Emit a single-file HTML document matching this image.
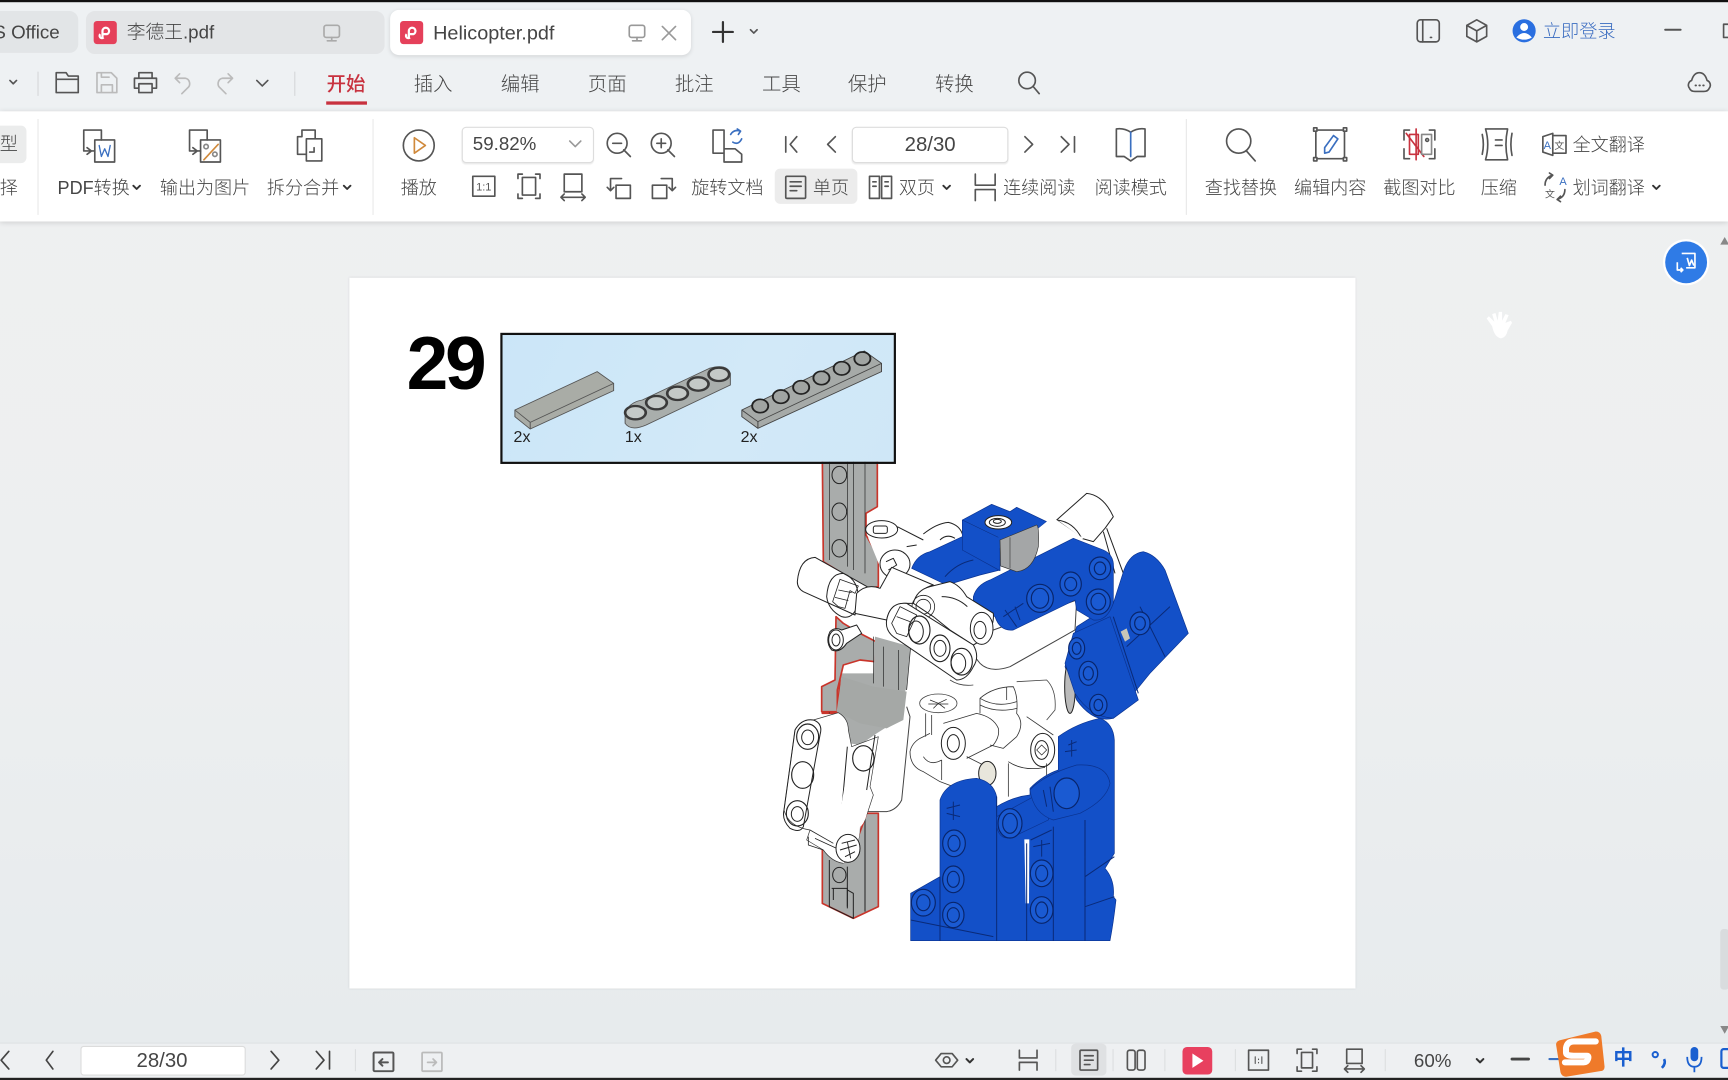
<!DOCTYPE html>
<html lang="zh-CN"><head><meta charset="utf-8"><title>Helicopter.pdf</title>
<style>
html,body{margin:0;padding:0;width:1728px;height:1080px;overflow:hidden;background:#eef0f1}
#w{position:absolute;left:0;top:0;width:1568px;height:980px;transform:scale(1.10204);transform-origin:0 0;overflow:hidden;filter:blur(.35px);
font-family:"Liberation Sans","Noto Sans CJK SC",sans-serif;color:#444;background:linear-gradient(#eff0f1,#edeff0 55%,#e7ebed 95%)}
#w div,#w span,#w svg{position:absolute}
.t{white-space:nowrap;line-height:24px;height:24px;font-size:16.4px;font-weight:300;color:#454545}
.c{transform:translateX(-50%)}
.m{font-size:17.6px;color:#474747}
svg{overflow:visible}
.ic{fill:none;stroke:#555;stroke-width:1.5;stroke-linejoin:round;stroke-linecap:round}
.k{stroke:#222;stroke-width:3;fill:#fff;stroke-linejoin:round}
.l{stroke:#222;stroke-width:3;fill:none;stroke-linejoin:round}
.g{fill:#a9acab;stroke:#333;stroke-width:2.2}
.r{fill:#a9acab;stroke:#c9352b;stroke-width:5;stroke-linejoin:round}
.b{fill:#1350c8;stroke:#0b3390;stroke-width:2;stroke-linejoin:round}
.d{fill:none;stroke:#0a2a78;stroke-width:3}
.h{fill:#1a5ad2;stroke:#08256c;stroke-width:3.5}
</style></head><body><div id="w">

<!-- chrome backgrounds -->
<div style="left:0;top:0;width:1568px;height:101px;background:#eef1f3"></div>
<div style="left:0;top:0;width:1568px;height:1.5px;background:#111"></div>
<div style="left:-10px;top:10px;width:81px;height:38px;background:#e2e5e7;border-radius:8px"></div>
<div style="left:78px;top:10px;width:271px;height:39px;background:#e3e5e7;border-radius:8px"></div>
<div style="left:354px;top:9px;width:273px;height:41px;background:#fff;border-radius:8px;box-shadow:0 1px 4px rgba(0,0,0,.12)"></div>
<div style="left:0;top:101px;width:1568px;height:100px;background:#fff;box-shadow:0 1px 5px rgba(0,0,0,.16)"></div>
<div style="left:-10px;top:114px;width:34px;height:34px;background:#ebecec;border-radius:5px"></div>
<div style="left:34px;top:108px;width:1px;height:87px;background:#e8e8e8"></div>
<div style="left:338px;top:108px;width:1px;height:87px;background:#e8e8e8"></div>
<div style="left:1076px;top:108px;width:1px;height:87px;background:#e8e8e8"></div>
<div style="left:34px;top:65px;width:1px;height:22px;background:#d5d7d9"></div>
<div style="left:267px;top:65px;width:1px;height:22px;background:#d5d7d9"></div>
<div style="left:419px;top:115px;width:118px;height:31px;background:#fff;border:1px solid #ddd;border-radius:4px;box-shadow:0 1px 1px rgba(0,0,0,.08)"></div>
<div style="left:773px;top:115px;width:140px;height:31px;background:#fff;border:1px solid #ddd;border-radius:4px;box-shadow:0 1px 1px rgba(0,0,0,.08)"></div>
<div style="left:703px;top:153px;width:75px;height:32px;background:#ececec;border-radius:5px"></div>
<div style="left:296px;top:92px;width:37px;height:2.5px;background:#c8323f"></div>

<!-- page -->
<div style="left:317px;top:252px;width:913px;height:645px;background:#fff;box-shadow:0 0 2px rgba(0,0,0,.12)"></div>

<!-- LEGO art -->
<svg width="1568" height="980" viewBox="0 0 1728 1080" style="left:0;top:0">
<g transform="translate(760,680) scale(.33333)">
 <path class="g" style="stroke:none" d="M240,-20H440L430,110L350,160L300,195L270,190L235,100Z"/>
 <path class="r" d="M187,100V25L240,0L232,100Z"/>
 <path class="l" d="M208,50V100M228,55H208"/>
 <path class="r" d="M187,505L215,530Q240,555 270,540L320,400H355V680L280,715L187,670Z"/>
 <path class="l" d="M208,540V680L280,715V640L262,630M315,400V695M262,560V685"/>
 <ellipse class="l" cx="238" cy="585" rx="20" ry="23"/>
 <path class="l" d="M215,625H262V680M220,625V660"/>
</g>
<g transform="translate(760,460) scale(.33333)">
 <path class="r" d="M187,-5H352V140L318,160V225L355,290V380L320,385L190,305Z"/>
 <path class="l" d="M208,0V300M262,0V320M280,0V330M315,0V340" style="stroke-width:2"/>
 <ellipse class="l" cx="238" cy="45" rx="22" ry="26"/><ellipse class="l" cx="238" cy="155" rx="22" ry="26"/><ellipse class="l" cx="238" cy="265" rx="22" ry="26"/>
 <path class="r" d="M228,470L250,490L300,520L348,545L345,605L300,600L250,615L232,690V755L185,755V680L225,660Z"/>
 <path style="fill:#a9acab;stroke:none" d="M345,530L452,560L440,690L340,670Z"/>
 <path class="l" d="M370,560V680M415,570V690M340,530V670M452,560L440,690" style="stroke-width:2"/>
 <path style="fill:#a5a8a6;stroke:none" d="M245,650L340,680L440,695L430,780L380,805L300,790L230,755Z"/>
 <path class="k" d="M210,515Q225,500 245,510L290,495L305,520L260,550Q240,580 215,570Q195,545 210,515Z"/>
 <ellipse class="k" cx="228" cy="540" rx="22" ry="30"/><ellipse class="l" cx="228" cy="540" rx="12" ry="18"/>
 <path d="M325,185Q370,170 412,200L560,185Q605,195 610,230L470,335L360,320L325,235Z" fill="#fff"/>
 <ellipse class="k" cx="365" cy="208" rx="48" ry="26"/><rect class="l" x="340" y="198" width="42" height="22" rx="6"/>
 <path class="l" d="M412,200L490,240M440,260L470,255M490,222Q530,190 565,187Q600,195 608,225M540,240Q560,220 585,235"/>
 <ellipse class="k" cx="405" cy="312" rx="45" ry="42"/><path class="l" d="M378,305L400,295L410,315L385,330"/>
 <path class="b" d="M455,325Q470,285 510,275L607,230L720,330L660,345L560,375Z"/>
 <path class="d" d="M555,350Q590,310 640,300"/>
 <path class="k" d="M980,100Q1030,105 1060,170L1035,205L1000,245L965,235L890,180Z"/>
 <path class="l" d="M890,180Q940,185 965,235M1040,205L1090,340M1030,215L1065,340"/>
 <path class="b" d="M607,180L695,133L750,155L770,142L860,185L835,205L720,265V332L607,270Z"/>
 <path class="d" d="M607,180L715,232" style="stroke-width:1.5"/>
 <ellipse class="k" cx="715" cy="187" rx="40" ry="20"/><ellipse class="l" cx="712" cy="187" rx="24" ry="12"/><ellipse class="l" cx="712" cy="184" rx="12" ry="6"/>
 <path d="M860,185L890,180L970,235L850,300L835,205Z" fill="#fff"/>
 <path class="b" d="M1092,330Q1110,280 1150,275Q1190,285 1215,330L1285,520L1170,640L1060,775Q1000,790 950,720L915,620L950,500L1060,430Z"/>
 <path class="d" d="M1060,470L1135,700M1140,440L1215,590M1100,560L1230,440"/>
 <ellipse class="k" cx="930" cy="680" rx="16" ry="80" style="fill:#bbb"/>
 <path class="b" d="M940,520L1050,470L1135,720L1060,775Q990,770 945,700L915,610Z"/>
 <ellipse class="h" cx="950" cy="565" rx="24" ry="32"/><ellipse class="h" cx="950" cy="565" rx="13" ry="18"/>
 <ellipse class="h" cx="985" cy="640" rx="28" ry="36"/><ellipse class="h" cx="985" cy="640" rx="15" ry="20"/>
 <ellipse class="h" cx="1015" cy="735" rx="26" ry="32"/><ellipse class="h" cx="1015" cy="735" rx="13" ry="17"/>
 <ellipse class="h" cx="1140" cy="490" rx="30" ry="34"/><ellipse class="h" cx="1140" cy="490" rx="16" ry="20"/>
 <path d="M1082,515L1100,505L1110,535L1095,545Z" fill="#c8c6b8"/>
 <path class="k" d="M700,510L950,420L945,510L750,620Q690,640 660,610L620,560Z" style="stroke:#444"/>
 <path class="b" d="M640,410Q650,375 690,360L940,235L1030,270Q1065,285 1060,330V430Q1040,485 1000,480L950,450L945,420L760,510Q720,515 705,470L640,430Z"/>
 <ellipse class="h" cx="840" cy="415" rx="40" ry="42"/><ellipse class="h" cx="840" cy="415" rx="26" ry="30"/>
 <ellipse class="h" cx="932" cy="372" rx="32" ry="36"/><ellipse class="h" cx="932" cy="372" rx="18" ry="20"/>
 <ellipse class="h" cx="1020" cy="325" rx="32" ry="34"/><ellipse class="h" cx="1020" cy="325" rx="17" ry="19"/>
 <ellipse class="h" cx="1015" cy="425" rx="36" ry="38"/><ellipse class="h" cx="1015" cy="425" rx="22" ry="25"/>
 <path class="d" d="M730,470L790,430M765,440L780,480M735,450L770,500"/>
 <path style="fill:#a4a6a7;stroke:#333;stroke-width:2" d="M720,240L830,195Q838,200 835,260Q820,330 770,335L722,318Z"/>
 <path class="l" d="M750,232V325" style="stroke-width:1.6"/>
 <!-- white arms -->
 <path class="k" d="M112,365Q118,295 165,292L330,385L300,395L285,465L130,395Q112,385 112,365Z"/>
 <path class="l" d="M200,410Q205,340 250,340Q300,360 295,430Q280,480 245,470Q205,450 200,410Z"/>
 <path class="l" d="M218,425L240,358L295,378L285,400L270,392L255,445L235,440ZM235,390L275,398M225,412L265,422" style="stroke-width:2.4"/>
 <path class="k" d="M290,400Q320,370 360,385L395,322L520,375Q480,385 460,430L445,430Q390,425 380,480L285,460Z"/>
 <path class="k" d="M460,430Q470,390 510,380L570,365Q600,375 620,410L700,460Q705,520 640,555L570,510L520,470Z"/>
 <path class="l" d="M545,410Q590,410 622,440"/>
 <ellipse class="l" cx="490" cy="440" rx="34" ry="34" style="stroke-width:2.4"/><ellipse class="l" cx="490" cy="440" rx="22" ry="22" style="stroke-width:2.4"/>
 <ellipse class="k" cx="665" cy="505" rx="34" ry="48"/><ellipse class="l" cx="660" cy="510" rx="18" ry="26"/>
 <path class="k" d="M380,480Q390,425 440,430L640,555Q660,590 640,620Q620,660 590,660L400,530Q375,510 380,480Z"/>
 <path class="l" d="M395,490L420,440L470,465L440,530L410,520ZM410,470L450,485" style="stroke-width:2.4"/>
 <ellipse class="l" cx="478" cy="510" rx="32" ry="42" style="stroke-width:3.4"/><ellipse class="l" cx="468" cy="515" rx="22" ry="32"/>
 <ellipse class="l" cx="540" cy="565" rx="30" ry="40" style="stroke-width:3.4"/><ellipse class="l" cx="540" cy="565" rx="18" ry="24"/>
 <ellipse class="l" cx="605" cy="605" rx="32" ry="40" style="stroke-width:3.4"/><ellipse class="l" cx="595" cy="610" rx="22" ry="30"/>
</g>
<g transform="translate(760,680) scale(.33333)">
 <path class="l" d="M440,80L450,110L425,360Q410,390 380,395L320,395" style="stroke:#444"/>
 <path class="k" d="M72,390L105,150Q125,115 160,120L235,98Q265,115 265,150L275,200L355,170L330,320L340,345L322,400L300,440Q300,510 250,550Q215,545 190,510L140,480L150,450Q85,440 72,390Z" style="stroke:#333;stroke-width:2"/>
 <path class="l" d="M105,150Q125,115 160,120Q190,130 180,165L130,440Q120,460 90,445Q65,420 72,390ZM262,200L240,450M345,165L320,330"/>
 <ellipse class="l" cx="143" cy="170" rx="33" ry="38" style="stroke-width:3.4"/><ellipse class="l" cx="143" cy="172" rx="18" ry="22"/>
 <ellipse class="l" cx="128" cy="285" rx="33" ry="40" style="stroke-width:3.4"/>
 <ellipse class="l" cx="112" cy="400" rx="33" ry="38" style="stroke-width:3.4"/><ellipse class="l" cx="112" cy="402" rx="18" ry="22"/>
 <ellipse class="l" cx="310" cy="235" rx="32" ry="38" style="stroke-width:3.4"/>
 <path d="M255,310Q300,300 330,350Q320,430 300,440Q300,510 250,550L225,520L240,400Z" fill="#fff"/>
 <path class="l" d="M150,450L220,490M165,475L230,505M145,470V495L190,510" style="stroke-width:2.4"/>
 <ellipse class="k" cx="264" cy="505" rx="36" ry="42"/><path class="l" d="M245,490L285,480M240,510L290,495M255,530L285,515M262,485L272,535" style="stroke-width:2.8"/>
 <!-- middle white technic, lines only -->
 <path class="l" d="M570,0Q600,20 640,15M770,5L860,0Q890,30 885,90L860,120" style="stroke:#444;stroke-width:2.4"/>
 <ellipse class="k" cx="535" cy="70" rx="56" ry="28" style="stroke:#444;stroke-width:2.4"/>
 <path class="l" d="M510,60L535,70L520,85M560,58L535,70L555,85M505,72H565" style="stroke-width:2.2"/>
 <path class="l" style="stroke:#333;stroke-width:2.4" d="M497,100V170M515,105V165M550,130L650,100Q700,110 715,145Q720,170 700,195L620,235M450,215Q450,260 490,275L540,305L575,318M450,215Q455,190 480,175L510,160M545,240V300M620,230L700,270M545,240Q510,260 490,230"/>
 <path class="l" style="stroke:#333;stroke-width:2.4" d="M660,100V55Q700,20 760,20Q775,50 770,100Q795,130 770,170L730,205L690,195M660,55Q710,85 770,65M660,75Q710,100 770,85M800,110L880,165M740,20V60"/>
 <ellipse class="k" cx="580" cy="190" rx="36" ry="48"/><ellipse class="l" cx="580" cy="190" rx="18" ry="26"/>
 <ellipse class="k" cx="848" cy="210" rx="36" ry="50"/><ellipse class="l" cx="845" cy="210" rx="20" ry="28"/><path class="l" d="M830,210L845,195L860,210L845,225Z" style="stroke-width:2"/>
 <ellipse class="k" cx="682" cy="280" rx="26" ry="36" style="fill:#e8e6dc"/>
 <path class="l" d="M745,245Q790,275 855,262M745,250V350M860,250V310" style="stroke-width:2.2"/>
 <!-- blue legs -->
 <path class="b" d="M452,640L540,590V360Q560,300 650,295Q700,305 710,350V380Q760,350 810,345V325Q850,285 895,270V170Q950,130 1020,115Q1060,130 1063,180V520L1035,565Q1065,600 1060,650L1068,660Q1060,730 1050,782H452Z"/>
 <path d="M793,478L808,478L807,670H797Z" fill="#fff"/>
 <path class="d" d="M710,350V782M800,490V782M880,440V782M975,420V782M812,480L875,450M1063,530L975,590M975,680L1063,650M540,590V782M452,720L700,770"/>
 <path class="b" d="M710,410L830,345Q875,370 865,420L760,470Q720,485 710,440Z"/>
 <ellipse class="h" cx="750" cy="430" rx="36" ry="44"/><ellipse class="h" cx="750" cy="430" rx="22" ry="30"/>
 <path class="b" d="M810,330Q850,285 950,255Q1040,250 1050,310Q1040,360 960,400L880,420Q820,400 810,330Z"/>
 <ellipse class="h" cx="920" cy="340" rx="38" ry="46"/>
 <path class="d" d="M850,330L860,380M870,320L880,395"/>
 <ellipse class="h" cx="582" cy="490" rx="34" ry="40"/><ellipse class="h" cx="582" cy="490" rx="18" ry="24"/>
 <ellipse class="h" cx="580" cy="598" rx="32" ry="40"/><ellipse class="h" cx="580" cy="598" rx="18" ry="24"/>
 <ellipse class="h" cx="580" cy="705" rx="32" ry="38"/><ellipse class="h" cx="580" cy="705" rx="18" ry="22"/>
 <ellipse class="h" cx="490" cy="668" rx="36" ry="40"/><ellipse class="h" cx="490" cy="668" rx="20" ry="24"/>
 <ellipse class="h" cx="845" cy="580" rx="34" ry="40"/><ellipse class="h" cx="845" cy="580" rx="18" ry="24"/>
 <ellipse class="h" cx="845" cy="690" rx="34" ry="40"/><ellipse class="h" cx="845" cy="690" rx="18" ry="24"/>
 <path class="d" d="M560,385L600,375M580,365V420M560,400L600,410M820,500L870,490M845,480V530M925,195L950,185M935,180V230M915,215L950,210"/>
</g>
</svg>

<!-- callout -->
<div style="left:454px;top:302px;width:355px;height:115px;background:linear-gradient(115deg,#cbe6f8,#d2e9f8 60%,#cfe7f7);border:2.5px solid #111"></div>
<svg width="1568" height="980" viewBox="0 0 1728 1080" style="left:0;top:0">
<g transform="translate(340,270) scale(.38270,.33333)">
 <path d="M457,420L672,305L715,340V362L497,477L457,440Z" fill="#a9aca6" stroke="#555" stroke-width="2.5"/>
 <path d="M457,420L497,457L715,340M497,457V477" fill="none" stroke="#555" stroke-width="2.5"/>
 <path d="M745,425Q760,395 790,390L965,295Q1010,280 1020,310V345L800,465Q760,485 745,460Z" fill="#a9aeac" stroke="#555" stroke-width="2.5"/>
 <g fill="#c4c9c7" stroke="#3a3a3a" stroke-width="7">
 <ellipse cx="772" cy="428" rx="27" ry="20"/><ellipse cx="827" cy="398" rx="27" ry="20"/><ellipse cx="882" cy="370" rx="27" ry="20"/><ellipse cx="936" cy="342" rx="27" ry="20"/><ellipse cx="990" cy="313" rx="27" ry="20"/></g>
 <path d="M1050,420L1370,243L1415,280V305L1092,475L1050,440Z" fill="#a6aaa8" stroke="#444" stroke-width="2.5"/>
 <path d="M1050,420L1092,455L1415,280M1092,455V475" fill="none" stroke="#444" stroke-width="2.5"/>
 <g fill="#a0a4a2" stroke="#222" stroke-width="5">
 <ellipse cx="1098" cy="408" rx="21" ry="20"/><ellipse cx="1152" cy="380" rx="21" ry="20"/><ellipse cx="1205" cy="352" rx="21" ry="20"/><ellipse cx="1258" cy="324" rx="21" ry="20"/><ellipse cx="1311" cy="295" rx="21" ry="20"/><ellipse cx="1365" cy="266" rx="21" ry="20"/></g>
</g>
</svg>
<span class="t" style="left:369px;top:288px;height:84px;line-height:84px;font-size:68px;font-weight:700;color:#000;letter-spacing:-3px">29</span>
<span class="t" style="left:466px;top:385px;font-size:14.5px;color:#222;font-weight:400">2x</span>
<span class="t" style="left:567px;top:385px;font-size:14.5px;color:#222;font-weight:400">1x</span>
<span class="t" style="left:672px;top:385px;font-size:14.5px;color:#222;font-weight:400">2x</span>

<!-- status bar -->
<div style="left:0;top:946px;width:1568px;height:32px;background:#eef0f2;border-top:1px solid #dfe2e4"></div>
<div style="left:0;top:978px;width:1568px;height:2px;background:#222"></div>
<div style="left:73px;top:949px;width:148px;height:25px;background:#fff;border:1px solid #dcdcdc;border-radius:3px"></div>
<div style="left:972px;top:947px;width:32px;height:29px;background:#dfe1e3;border-radius:4px"></div>
<div style="left:322px;top:952px;width:1px;height:20px;background:#dcdee0"></div>
<div style="left:1073px;top:950px;width:27px;height:25px;background:#e8405f;border-radius:4px"></div>

<!-- text: tabs -->
<span class="t" style="left:-6px;top:18px;font-size:17px;font-weight:400">S Office</span>
<span class="t" style="left:115px;top:18px;font-size:17px">李德王.pdf</span>
<span class="t" style="left:393px;top:18px;font-size:18px">Helicopter.pdf</span>
<span class="t" style="left:1400px;top:17px;font-size:16.5px;color:#3a6cc0">立即登录</span>

<!-- menu -->
<span class="t c m" style="left:314px;top:64px;color:#c8323f;font-weight:500">开始</span>
<span class="t c m" style="left:393px;top:64px">插入</span>
<span class="t c m" style="left:472px;top:64px">编辑</span>
<span class="t c m" style="left:551px;top:64px">页面</span>
<span class="t c m" style="left:630px;top:64px">批注</span>
<span class="t c m" style="left:709px;top:64px">工具</span>
<span class="t c m" style="left:787px;top:64px">保护</span>
<span class="t c m" style="left:866px;top:64px">转换</span>

<!-- ribbon labels -->
<span class="t c" style="left:8px;top:119px">型</span>
<span class="t c" style="left:8px;top:159px">择</span>
<span class="t c" style="left:85px;top:159px">PDF转换</span>
<span class="t c" style="left:186px;top:159px">输出为图片</span>
<span class="t c" style="left:275px;top:159px">拆分合并</span>
<span class="t c" style="left:380px;top:159px">播放</span>
<span class="t" style="left:429px;top:119px;font-size:17px">59.82%</span>
<span class="t c" style="left:844px;top:119px;font-size:18.5px">28/30</span>
<span class="t c" style="left:660px;top:159px">旋转文档</span>
<span class="t c" style="left:754px;top:159px">单页</span>
<span class="t c" style="left:832px;top:159px">双页</span>
<span class="t c" style="left:943px;top:159px">连续阅读</span>
<span class="t c" style="left:1026px;top:159px">阅读模式</span>
<span class="t c" style="left:1126px;top:159px">查找替换</span>
<span class="t c" style="left:1207px;top:159px">编辑内容</span>
<span class="t c" style="left:1288px;top:159px">截图对比</span>
<span class="t c" style="left:1360px;top:159px">压缩</span>
<span class="t" style="left:1427px;top:120px">全文翻译</span>
<span class="t" style="left:1427px;top:159px">划词翻译</span>

<!-- status text -->
<span class="t c" style="left:147px;top:950px;font-size:18.5px">28/30</span>
<span class="t c" style="left:1300px;top:951px;font-size:17px">60%</span>

<!-- icons -->
<svg width="1568" height="980" viewBox="0 0 1568 980" style="left:0;top:0">
<g class="ic">
 <!-- tab icons -->
 <g transform="translate(301,30)" stroke="#aaa"><rect x="-7" y="-7" width="14" height="11" rx="2"/><path d="M-4,7H4M0,4V7"/></g>
 <g transform="translate(578,30)" stroke="#999"><rect x="-7" y="-7" width="14" height="11" rx="2"/><path d="M-4,7H4M0,4V7"/></g>
 <path d="M601,24L613,36M613,24L601,36" stroke="#999"/>
 <path d="M656,20V38M647,29H665" stroke="#333" stroke-width="2"/>
 <path d="M681,27L684,30L687,27" stroke="#555"/>
 <!-- right top -->
 <g transform="translate(1296,28)"><rect x="-10" y="-10" width="20" height="20" rx="3"/><path d="M-5,-10V10M2,6H3"/></g>
 <g transform="translate(1340,28)"><path d="M0,-10L9,-5V5L0,10L-9,5V-5ZM-9,-5L0,0L9,-5M0,0V10"/></g>
 <path d="M1511,27H1525" stroke-width="1.8"/>
 <path d="M1564,22H1570V34H1564Z"/>
 <!-- row 2 -->
 <path d="M9,73L12,76L15,73" stroke="#555"/>
 <g transform="translate(61,75)"><path d="M-10,-9H-1L1,-6H10V9H-10ZM-10,-3H10"/></g>
 <g transform="translate(97,75)" stroke="#bbb"><path d="M-9,-9H4L9,-4V9H-9ZM-5,9V2H5V9M-5,-9V-5H2"/></g>
 <g transform="translate(132,75)"><path d="M-6,-4V-9H6V-4M-6,5H-10V-4H10V5H6M-6,1H6V9H-6Z"/></g>
 <g transform="translate(167,75)" stroke="#bbb"><path d="M-4,-8L-8,-4L-4,0M-8,-4H1A5,5 0 0 1 3,5L-2,10"/></g>
 <g transform="translate(203,75)" stroke="#bbb"><path d="M4,-8L8,-4L4,0M8,-4H-1A5,5 0 0 0 -3,5L2,10"/></g>
 <path d="M233,73L238,78L243,73" stroke="#555"/>
 <g transform="translate(934,75)" stroke-width="1.5"><circle cx="-2" cy="-2" r="7.5"/><path d="M3.5,3.5L9,10"/></g>
 <g transform="translate(1542,75)"><path d="M-9,5A4.5,4.5 0 0 1 -7,-2Q-5,-9 0,-9Q5,-9 7,-2A4.5,4.5 0 0 1 9,5Q8,8 4,8H-4Q-8,8 -9,5Z"/><path d="M-3.5,2.5H-3M0,2.5H.5M3.5,2.5H4" stroke-width="1.7"/></g>
 <!-- PDF convert -->
 <g transform="translate(90,132)"><path d="M2,-5V-14H-14V5H-4M-11,2L-7,5L-11,8"/><rect x="-4" y="-5" width="18" height="20"/><path d="M0,0L2,10L5,3L8,10L10,0" stroke="#3a6fc0" stroke-width="1.2"/></g>
 <g transform="translate(186,132)"><path d="M2,-5V-14H-14V5H-4M-11,2L-7,5L-11,8"/><rect x="-4" y="-5" width="18" height="20"/><path d="M-1,13L12,-1" stroke="#d08a3c"/><circle cx="1" cy="1" r="2" stroke="#888"/><circle cx="9" cy="8" r="2" stroke="#888"/></g>
 <g transform="translate(282,132)"><path d="M4,-6V-14H-8V-8H-12V8H-4M-4,-6H10V14H-4ZM-1,6H3V2"/></g>
 <g transform="translate(380,132)"><circle r="14"/><path d="M-4,-7L6,0L-4,7Z" stroke="#d08a3c"/></g>
 <path d="M517,128L522,133L527,128" stroke="#999"/>
 <g transform="translate(561,131)"><circle cx="-1" cy="-1" r="9"/><path d="M5,5L11,11M-5,-1H3"/></g>
 <g transform="translate(601,131)"><circle cx="-1" cy="-1" r="9"/><path d="M5,5L11,11M-5,-1H3M-1,-5V3"/></g>
 <g transform="translate(660,131)"><path d="M-3,4V-13H-13V8H-3M-3,4H7L13,9V16H-3Z"/><path d="M3,-9Q6,-14 12,-12M12,-12L9,-14M12,-12L10,-9M13,-5Q10,1 5,-2" stroke="#3a6fc0"/></g>
 <path d="M713,124V138M723,124L717,131L723,138" stroke-width="1.5"/>
 <path d="M758,124L751,131L758,138"/>
 <path d="M930,124L937,131L930,138"/>
 <path d="M963,124L970,131L963,138M975,124V138"/>
 <g transform="translate(1026,131)"><path d="M0,-11Q-6,-15 -13,-14V11H-6L0,15L6,11H13V-14Q6,-15 0,-11Z"/><path d="M0,-11V11" stroke="#3a6fc0"/></g>
 <!-- row small -->
 <g transform="translate(439,169)"><rect x="-10" y="-9" width="20" height="18"/></g>
 <g transform="translate(480,169)"><rect x="-6" y="-8" width="12" height="16"/><path d="M-10,-7V-11H-6M6,-11H10V-7M10,7V11H6M-6,11H-10V7"/></g>
 <g transform="translate(520,169)"><rect x="-8" y="-11" width="16" height="16"/><path d="M-11,10H11M-8,7L-11,10L-8,13M8,7L11,10L8,13"/></g>
 <g transform="translate(562,169)"><rect x="-3" y="-1" width="13" height="12"/><path d="M-8,4V-7H2M-11,1L-8,4L-5,1"/></g>
 <g transform="translate(602,169)"><rect x="-10" y="-1" width="13" height="12"/><path d="M8,4V-7H-2M11,1L8,4L5,1"/></g>
 <g transform="translate(722,170)"><rect x="-9" y="-10" width="18" height="20" rx="1"/><path d="M-5,-5H5M-5,-1H5M-5,3H1"/></g>
 <g transform="translate(799,170)"><rect x="-10" y="-10" width="9" height="20"/><rect x="1" y="-10" width="9" height="20"/><path d="M-7,-5H-4M-7,-1H-4M4,-5H7M4,-1H7"/></g>
 <g transform="translate(894,170)"><path d="M-9,-12V-2H9V-12M-9,12V2H9V12"/></g>
 <path d="M121,168.5L124,171.5L127,168.5M312,168.5L315,171.5L318,168.5M856,168.5L859,171.5L862,168.5M1500,168.5L1503,171.5L1506,168.5" stroke="#333" stroke-width="1.7"/>
 <!-- right ribbon -->
 <g transform="translate(1126,131)" stroke-width="1.5"><circle cx="-2" cy="-3" r="11"/><path d="M5,6L13,15"/></g>
 <g transform="translate(1207,131)"><path d="M-11,-13H11M-11,13H11M-13,-11V11M13,-11V11"/><rect x="-15" y="-15" width="3" height="3"/><rect x="12" y="-15" width="3" height="3"/><rect x="-15" y="12" width="3" height="3"/><rect x="12" y="12" width="3" height="3"/><path d="M-5,8V3L3,-8L7,-5L-1,7Z" stroke="#3a6fc0"/></g>
 <g transform="translate(1288,131)"><path d="M-9,-13H-14V-4M9,-13H14V-4M-9,13H-14V4M9,13H14V4"/><rect x="-9" y="-9" width="8" height="18" stroke="#c8323f"/><path d="M-12,-10L4,11M-3,-14V14" stroke="#c8323f"/><rect x="2" y="-9" width="9" height="18" stroke="#888"/><circle cx="7" cy="-4" r="1.3"/></g>
 <g transform="translate(1360,131)"><path d="M-12,-14H8Q5,0 8,14H-12Q-8,0 -12,-14ZM-3,-4H3M-3,1H3M12,-10Q10,0 12,10M-15,-9Q-13,0 -15,9"/></g>
 <g transform="translate(1411,131)"><path d="M-11,-7L-2,-10V10L-11,7ZM-2,-8H10V8H-2"/></g>
 <g transform="translate(1411,170)"><path d="M-2,-11Q-9,-9 -9,-2M-5,-13L-2,-11L-5,-8M2,11Q9,9 9,2M5,13L2,11L5,8"/></g>
 <!-- status icons -->
 <path d="M8,954L1,962L8,970M48,954L42,962L48,970" stroke="#444"/>
 <path d="M246,954L253,962L246,970M287,954L294,962L287,970M299,954V970" stroke="#444"/>
 <g transform="translate(348,963)" stroke="#555" stroke-width="1.8"><rect x="-9" y="-8" width="18" height="17" rx="1"/><path d="M-4,1H4M-1,-2L-4,1L-1,4"/></g>
 <g transform="translate(392,963)" stroke="#bbb" stroke-width="1.6"><rect x="-9" y="-8" width="18" height="17" rx="1"/><path d="M-4,1H4M1,-2L4,1L1,4"/></g>
 <g transform="translate(859,962)"><path d="M-10,0L-5,-6H5L10,0L5,6H-5Z"/><circle r="3"/></g>
 <path d="M877,961L880,964L883,961M1340,961L1343,964L1346,961" stroke="#333" stroke-width="1.8"/>
 <g transform="translate(933,962)"><path d="M-8,-9V-2H8V-9M-8,9V2H8V9"/></g>
 <g transform="translate(988,962)"><rect x="-8" y="-9" width="16" height="18" rx="1"/><path d="M-4,-4H4M-4,0H4M-4,4H1"/></g>
 <g transform="translate(1031,962)"><rect x="-8" y="-9" width="7" height="18" rx="2"/><rect x="1" y="-9" width="7" height="18" rx="2"/></g>
 <g transform="translate(1142,962)"><rect x="-9" y="-9" width="18" height="18"/><path d="M-3,-3V3M3,-3V3M0,-1V-.5M0,2V2.5" stroke-width="1"/></g>
 <g transform="translate(1186,962)"><rect x="-5" y="-7" width="10" height="14"/><path d="M-9,-6V-10H-5M5,-10H9V-6M9,6V10H5M-5,10H-9V6"/></g>
 <g transform="translate(1229,962)"><rect x="-7" y="-10" width="14" height="13"/><path d="M-9,8H9M-6,5L-9,8L-6,11M6,5L9,8L6,11"/></g>
 <path d="M1372,961H1387" stroke="#444" stroke-width="2.6"/>
 <path d="M1406,961H1420" stroke="#3a6fc0" stroke-width="2"/>
</g>
<path d="M1082,956V969L1092,962.5Z" fill="#fff"/>
<g stroke="#dcdee0" stroke-width="1"><path d="M1057,952V972M1121,952V972M958,952V972M1010,952V972M1257,952V972"/></g>
<!-- red pdf icons -->
<g><rect x="85" y="19" width="21" height="21" rx="3" fill="#e5405a"/><rect x="363" y="19" width="21" height="21" rx="3" fill="#e5405a"/></g>
<g fill="none" stroke="#fff" stroke-width="2"><path d="M93,34V28A3,3 0 1 1 97,31H94M91,31A2,2 0 1 0 94,34"/><path d="M371,34V28A3,3 0 1 1 375,31H372M369,31A2,2 0 1 0 372,34"/></g>
<!-- user -->
<circle cx="1383" cy="28" r="10.5" fill="#2a6fe0"/><circle cx="1383" cy="24.5" r="3.6" fill="#fff"/><path d="M1376,34Q1383,26 1390,34Q1383,38 1376,34Z" fill="#fff"/>
<!-- float button -->
<circle cx="1530" cy="238" r="21" fill="#fff" opacity=".9"/><circle cx="1530" cy="238" r="19" fill="#2f7be6"/>
<g fill="none" stroke="#fff" stroke-width="1.5" stroke-linejoin="round"><path d="M1526,230H1538V243H1530M1522,238V245H1527M1525,243L1527,245L1525,247"/><path d="M1531,234L1533,241L1535,236L1537,241"/></g>
<!-- scrollbar -->
<path d="M1561,222L1565,215L1569,222Z" fill="#888"/><path d="M1561,931L1565,938L1569,931Z" fill="#888"/>
<rect x="1561" y="843" width="8" height="55" rx="3" fill="#d9dcde"/>
<!-- hand -->
<g fill="#fff"><path d="M1354,296L1349,289L1351,287L1356,292L1354,285L1357,284L1359,291L1360,283L1363,283L1363,291L1366,285L1369,286L1366,293L1371,291L1372,293L1368,300Q1367,306 1362,307Q1356,306 1354,296Z"/></g>
<!-- sogou -->
<path d="M1415,944L1448,936Q1452,936 1453,940L1456,968Q1456,972 1452,972L1421,977Q1417,977 1416,973L1412,948Q1412,945 1415,944Z" fill="#ef7a2a"/>
<path d="M1448,945H1428Q1422,945 1421,951L1421,955Q1421,958 1428,958H1440Q1442,958 1441,961Q1440,964 1437,964H1420" fill="none" stroke="#fff" stroke-width="5.5" stroke-linecap="round" stroke-linejoin="round"/>
<text x="1473" y="966" font-family="'Noto Sans CJK SC',sans-serif" font-size="18" font-weight="700" fill="#1a5fd0" text-anchor="middle">中</text>
<circle cx="1502" cy="957" r="2.4" fill="none" stroke="#1a5fd0" stroke-width="1.8"/><path d="M1510,961Q1512,965 1508,969" fill="none" stroke="#1a5fd0" stroke-width="2.4"/>
<rect x="1534" y="950" width="7" height="13" rx="3.5" fill="#1a5fd0"/><path d="M1531,959Q1531,968 1537.5,968Q1544,968 1544,959M1537.5,968V973" fill="none" stroke="#1a5fd0" stroke-width="1.6"/>
<rect x="1562" y="952" width="12" height="17" rx="2" fill="none" stroke="#1a5fd0" stroke-width="2"/>
<text x="439" y="173" font-size="10" text-anchor="middle" fill="#555" font-family="'Liberation Sans',sans-serif">1:1</text>
<text x="1404" y="135" font-size="10" text-anchor="middle" fill="#3a6fc0" font-family="'Liberation Sans',sans-serif">A</text>
<text x="1415" y="135" font-size="9" text-anchor="middle" fill="#555" font-family="'Liberation Sans','Noto Sans CJK SC',sans-serif">文</text>
<text x="1415" y="168" font-size="10" fill="#3a6fc0" font-family="'Liberation Sans',sans-serif">A</text>
<text x="1402" y="179" font-size="9" fill="#555" font-family="'Liberation Sans','Noto Sans CJK SC',sans-serif">文</text>
</svg>
</div></body></html>
